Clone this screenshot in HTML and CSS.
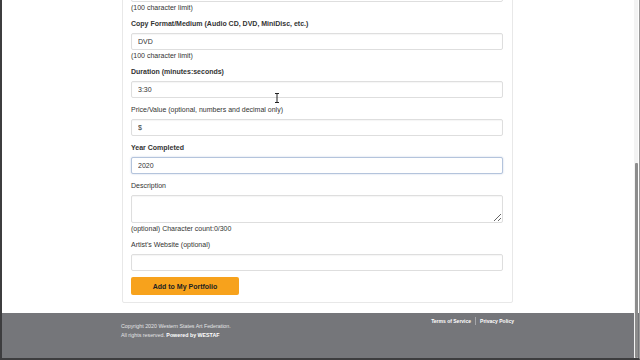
FILE: index.html
```html
<!DOCTYPE html>
<html>
<head>
  <title>Add Work</title>
  <link rel="stylesheet" href="styles.css">
</head>
<body>
  <div class="screen">
    <div class="card">
      <input type="text" class="field-input" value="">
      <div class="hint">(100 character limit)</div>

      <div class="field">
        <label class="bold">Copy Format/Medium (Audio CD, DVD, MiniDisc, etc.)</label>
        <input type="text" class="field-input" value="DVD">
        <div class="hint">(100 character limit)</div>
      </div>

      <div class="field">
        <label class="bold">Duration (minutes:seconds)</label>
        <input type="text" class="field-input" value="3:30">
      </div>

      <div class="field">
        <label>Price/Value (optional, numbers and decimal only)</label>
        <input type="text" class="field-input" value="$">
      </div>

      <div class="field">
        <label class="bold">Year Completed</label>
        <input type="text" class="field-input focused" value="2020">
      </div>

      <div class="field">
        <label>Description</label>
        <textarea class="field-input area"></textarea>
        <div class="hint">(optional) Character count:0/300</div>
      </div>

      <div class="field">
        <label>Artist's Website (optional)</label>
        <input type="text" class="field-input" value="">
      </div>

      <button class="submit">Add to My Portfolio</button>
    </div>

    <div class="footer">
      <div class="footer-inner">
        <div class="copy">
          Copyright 2020 Western States Art Federation.<br>
          All rights reserved. <b>Powered by WESTAF</b>
        </div>
        <div class="links">
          <span>Terms of Service</span>
          <span class="sep"></span>
          <span>Privacy Policy</span>
        </div>
      </div>
    </div>

    <svg class="cursor" width="6" height="10" viewBox="0 0 6 10">
      <path d="M1 0.5h4M1 9.5h4M3 0.5v9" stroke="#222" stroke-width="1" fill="none"/>
    </svg>
    <div class="scrollbar"><div class="thumb"></div></div>
  </div>
</body>
</html>
```

FILE: styles.css
```css
html, body {
  margin: 0;
  height: 100%;
  overflow: hidden;
  background: #fff;
}
body {
  font-family: "Liberation Sans", Arial, sans-serif;
  color: #333;
  font-size: 7px;
}
.screen {
  position: relative;
  height: 360px;
  box-sizing: border-box;
  border-left: 2px solid #3d3d3f;
  border-bottom: 2px solid #3d3d3f;
  border-right: 1px solid #9a9a9a;
  overflow: hidden;
}
.card {
  width: 391px;
  margin: -16px 0 0 120px;
  border: 1px solid #e8e8e8;
  border-radius: 2px;
  padding: 0 9px 7px 8px;
  box-sizing: border-box;
}
.field {
  margin-top: 7px;
}
label {
  display: block;
  line-height: 9px;
  margin-bottom: 5px;
  color: #333;
}
.bold {
  font-weight: bold;
}
.field-input {
  display: block;
  width: 100%;
  height: 17px;
  box-sizing: border-box;
  border: 1px solid #dedede;
  border-radius: 2px;
  padding: 0 6px;
  font-family: inherit;
  font-size: 7px;
  color: #333;
  background: #fff;
  margin: 0;
  outline: none;
  box-shadow: inset 0 1px 1px rgba(0, 0, 0, 0.04);
}
.focused {
  border-color: #b4c4dc;
  box-shadow: 0 0 2px rgba(110, 140, 190, 0.4);
}
.area {
  height: 28px;
  padding: 3px 6px;
  resize: vertical;
}
.hint {
  line-height: 9px;
  margin-top: 1px;
  margin-bottom: 2px;
}
.submit {
  display: block;
  margin-top: 6px;
  width: 108px;
  height: 18px;
  background-color: #f7a21c;
  border: none;
  border-radius: 2px;
  font-family: inherit;
  font-weight: bold;
  font-size: 7px;
  color: #222;
  padding: 0;
}
.footer {
  margin-top: 10px;
  height: 46px;
  background: #75767a;
}
.footer-inner {
  width: 393px;
  margin-left: 119px;
  display: flex;
  justify-content: space-between;
  align-items: flex-start;
}
.copy {
  padding-top: 9px;
  font-size: 5.3px;
  line-height: 9px;
  color: #e4e4e6;
}
.copy b {
  color: #fff;
}
.links {
  display: flex;
  align-items: center;
  padding-top: 4px;
  font-size: 5px;
  font-weight: bold;
  color: #fff;
}
.sep {
  width: 1px;
  height: 8px;
  background: #a6a7ab;
  margin: 0 4px;
}
.cursor {
  position: absolute;
  left: 272px;
  top: 93px;
}
.scrollbar {
  position: absolute;
  right: 1px;
  top: 0;
  bottom: 0;
  width: 4px;
  background: #f3f3f3;
}
.thumb {
  margin-top: 163px;
  height: 195px;
  width: 3px;
  margin-left: 1px;
  background: #8c8c8c;
  border-radius: 1px;
}
```
